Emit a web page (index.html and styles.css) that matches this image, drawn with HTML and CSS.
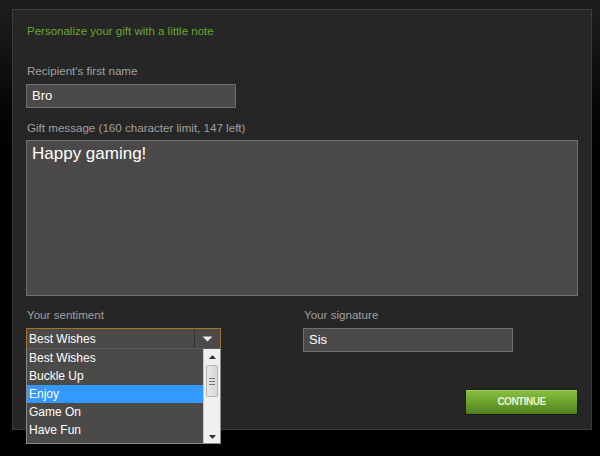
FILE: index.html
```html
<!DOCTYPE html>
<html>
<head>
<meta charset="utf-8">
<link rel="stylesheet" href="styles.css">
</head>
<body>
<div class="panel">
  <div class="heading">Personalize your gift with a little note</div>
  <div class="label label-first">Recipient's first name</div>
  <div class="input">Bro</div>
  <div class="label label-msg">Gift message (160 character limit, 147 left)</div>
  <div class="textarea">Happy gaming!</div>
  <div class="row">
    <div class="col">
      <div class="label">Your sentiment</div>
      <div class="select">
        <span class="select-value">Best Wishes</span>
        <span class="select-arrow"><svg width="9" height="6" viewBox="0 0 9 6"><polygon points="0,1 9,1 4.5,5.5" fill="#e8e8e8"/><line x1="0" y1="0.5" x2="9" y2="0.5" stroke="#9a9a9a"/></svg></span>
      </div>
      <div class="dropdown">
        <ul class="options">
          <li>Best Wishes</li>
          <li>Buckle Up</li>
          <li class="active">Enjoy</li>
          <li>Game On</li>
          <li>Have Fun</li>
        </ul>
        <div class="scrollbar">
          <svg class="sb-up" width="7" height="4" viewBox="0 0 7 4"><polygon points="0,4 7,4 3.5,0" fill="#333"/></svg>
          <div class="thumb"><span></span><span></span><span></span></div>
          <svg class="sb-down" width="7" height="4" viewBox="0 0 7 4"><polygon points="0,0 7,0 3.5,4" fill="#333"/></svg>
        </div>
      </div>
    </div>
    <div class="col-right">
      <div class="label">Your signature</div>
      <div class="input">Sis</div>
    </div>
  </div>
  <div class="actions">
    <div class="button">CONTINUE</div>
  </div>
</div>
</body>
</html>
```
FILE: styles.css
```css
html, body {
  margin: 0;
  padding: 0;
}
body {
  width: 600px;
  height: 456px;
  overflow: hidden;
  background: linear-gradient(to bottom, #1e1e1e 0%, #161616 40px, #050505 110px, #000 160px, #000 100%);
  font-family: "Liberation Sans", Arial, sans-serif;
  padding: 9px 0 0 12px;
  box-sizing: border-box;
}
.panel {
  position: relative;
  width: 580px;
  height: 421px;
  box-sizing: border-box;
  background: #262626;
  border: 1px solid #3b3b3b;
  padding: 14px 13px 0 13px;
}
.heading {
  color: #6aa62b;
  font-size: 11.5px;
  line-height: 14px;
  padding-left: 1px;
}
.label {
  color: #a0a0a0;
  font-size: 11.6px;
  line-height: 14px;
  margin-bottom: 6px;
  padding-left: 1px;
}
.label-first {
  margin-top: 26px;
}
.label-msg {
  margin-top: 13px;
  margin-bottom: 5px;
}
.input {
  width: 210px;
  height: 24px;
  box-sizing: border-box;
  background: #4b4a49;
  border: 1px solid #6f6f6f;
  color: #ffffff;
  font-size: 13px;
  line-height: 22px;
  padding-left: 5px;
}
.textarea {
  width: 552px;
  height: 156px;
  box-sizing: border-box;
  background: #4b4a49;
  border: 1px solid #6f6f6f;
  color: #ffffff;
  font-size: 17px;
  line-height: 20px;
  padding: 3px 5px;
}
.row {
  display: flex;
  margin-top: 12px;
}
.col {
  position: relative;
  flex: 0 0 277px;
}
.col-right {
  flex: 0 0 auto;
}
.select {
  width: 195px;
  height: 21px;
  box-sizing: border-box;
  background: #4b4a49;
  border: 1px solid #a0762b;
  display: flex;
  align-items: stretch;
  color: #ffffff;
  font-size: 12px;
}
.select-value {
  flex: 1;
  line-height: 20px;
  padding-left: 2px;
}
.select-arrow {
  width: 25px;
  border-left: 1px solid #333;
  display: flex;
  align-items: center;
  justify-content: center;
}
.dropdown {
  position: absolute;
  left: 0;
  top: 40px;
  width: 195px;
  height: 96px;
  box-sizing: border-box;
  border: 1px solid #8a8a8a;
  border-top-color: #5a5a5a;
  background: #4b4a49;
  display: flex;
  z-index: 2;
}
.options {
  list-style: none;
  margin: 0;
  padding: 0;
  flex: 1;
}
.options li {
  height: 18px;
  line-height: 18px;
  color: #ffffff;
  font-size: 12px;
  padding-left: 2px;
}
.options li.active {
  background: #3399ff;
}
.scrollbar {
  width: 16px;
  background: #f0f0f0;
  border-left: 1px solid #c8c8c8;
  display: flex;
  flex-direction: column;
  align-items: center;
}
.sb-up {
  margin-top: 6px;
}
.thumb {
  width: 12px;
  height: 32px;
  margin-top: 6px;
  box-sizing: border-box;
  border: 1px solid #b5b5b5;
  border-radius: 2px;
  background: linear-gradient(to right, #e8e8e8, #d6d6d6);
  display: flex;
  flex-direction: column;
  align-items: center;
  justify-content: center;
  gap: 2px;
}
.thumb span {
  width: 6px;
  height: 1px;
  background: #777;
}
.sb-down {
  margin-top: auto;
  margin-bottom: 4px;
}
.actions {
  display: flex;
  justify-content: flex-end;
  margin-top: 38px;
  padding-right: 1px;
}
.button {
  width: 111px;
  height: 24px;
  box-sizing: border-box;
  background: linear-gradient(to bottom, #86be3f 0%, #6aa32c 50%, #4d7d1f 100%);
  border-top: 1px solid #9fd05a;
  box-shadow: 0 1px 0 #171717, 0 0 0 1px #1e1e1e;
  color: #e6f3d8;
  font-size: 10px;
  font-weight: bold;
  letter-spacing: -0.5px;
  text-align: center;
  line-height: 22px;
}
```
